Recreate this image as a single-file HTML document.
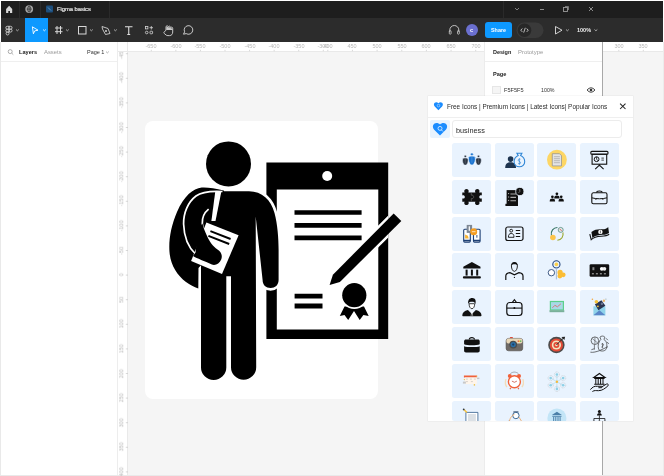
<!DOCTYPE html><html><head><meta charset="utf-8"><style>
*{margin:0;padding:0;box-sizing:border-box}
html,body{width:664px;height:476px;overflow:hidden;background:#fff;font-family:"Liberation Sans",sans-serif}
.ab{position:absolute}
.t{position:absolute;white-space:nowrap;line-height:1;will-change:transform}
svg{position:absolute;overflow:visible}
</style></head><body>
<div class="ab" style="left:0;top:42px;width:1px;height:434px;background:#e9e9e9"></div>
<div class="ab" style="left:0;top:475px;width:664px;height:1px;background:#e9e9e9"></div>
<div class="ab" style="left:663px;top:42px;width:1px;height:434px;background:#ececec"></div>
<div class="ab" style="left:1px;top:1px;width:662px;height:17px;background:#1e1e1e"></div>
<div class="ab" style="left:19px;top:1px;width:1px;height:17px;background:#2a2a2a"></div>
<div class="ab" style="left:40px;top:1px;width:1px;height:17px;background:#2a2a2a"></div>
<div class="ab" style="left:109px;top:1px;width:1px;height:17px;background:#2a2a2a"></div>
<div class="ab" style="left:503px;top:1px;width:1px;height:17px;background:#2a2a2a"></div>
<svg style="left:0;top:0" width="664" height="18" viewBox="0 0 664 18"><path d="M6.1 9.1 L9.15 5.8 L12.2 9.1 V13 H10 V11 H8.3 V13 H6.1 Z" fill="#d8d8d8"/><circle cx="29.2" cy="9.1" r="3.9" fill="#a6a6a6"/><ellipse cx="29.2" cy="9.1" rx="1.6" ry="3" fill="none" stroke="#1e1e1e" stroke-width="0.6"/><path d="M26.6 9.1 H31.8 M29.2 6.2 V12" stroke="#1e1e1e" stroke-width="0.6"/><rect x="46" y="5.5" width="7" height="7" rx="1" fill="#1d4f7e"/><path d="M48 7.5 L51 10.5" stroke="#6aa6d6" stroke-width="0.8"/><path d="M515 8 L517 10 L519 8" fill="none" stroke="#9a9a9a" stroke-width="0.8"/><path d="M540 9.5 H544" stroke="#9a9a9a" stroke-width="0.9"/><rect x="563.5" y="7.5" width="4" height="4" fill="none" stroke="#9a9a9a" stroke-width="0.9"/><path d="M565 6.5 H568.5 V10" fill="none" stroke="#9a9a9a" stroke-width="0.7"/><path d="M589 7 L593 11 M593 7 L589 11" stroke="#9a9a9a" stroke-width="0.9"/></svg>
<div class="t" style="left:57px;top:6.8px;font-size:5.9px;letter-spacing:-0.07px;color:#e6e6e6;font-weight:normal;-webkit-text-stroke:0.18px #e6e6e6">Figma basics</div>
<div class="ab" style="left:1px;top:18px;width:662px;height:24px;background:#2c2c2c"></div>
<div class="ab" style="left:25px;top:18px;width:23px;height:24px;background:#0d99ff"></div>
<svg style="left:0;top:18px" width="664" height="24" viewBox="0 18 664 24"><path d="M9 26.3 H7.3 A1.45 1.45 0 0 0 7.3 29.2 H9 Z M9 26.3 H10.6 A1.45 1.45 0 0 1 10.6 29.2 H9 Z M9 29.2 H7.3 A1.45 1.45 0 0 0 7.3 32.1 H9 Z M9 32.1 H7.3 A1.45 1.45 0 1 0 9 33.6 Z" fill="none" stroke="#cfcfcf" stroke-width="0.9"/><circle cx="10.6" cy="30.65" r="1.45" fill="none" stroke="#cfcfcf" stroke-width="0.9"/><path d="M16 29.5 L17.4 30.8 L18.8 29.5" fill="none" stroke="#c8c8c8" stroke-width="0.8"/><path d="M32.4 26.8 L38 30.2 L34.7 30.9 L33.4 33.8 Z" fill="none" stroke="#fff" stroke-width="0.9" stroke-linejoin="round"/><path d="M43 29.5 L44.4 30.8 L45.8 29.5" fill="none" stroke="#fff" stroke-width="0.8"/><path d="M57 26 V34 M60.5 26 V34 M55 28 H62.5 M55 31.7 H62.5" stroke="#d8d8d8" stroke-width="1"/><path d="M66 29.5 L67.4 30.8 L68.8 29.5" fill="none" stroke="#c8c8c8" stroke-width="0.8"/><rect x="78.5" y="26.5" width="7.5" height="7.5" fill="none" stroke="#d8d8d8" stroke-width="1"/><path d="M90 29.5 L91.4 30.8 L92.8 29.5" fill="none" stroke="#c8c8c8" stroke-width="0.8"/><path d="M102 26.5 L108 28.5 L110 33.5 L105.5 34.5 L102.5 29 Z" fill="none" stroke="#d0d0d0" stroke-width="0.9"/><circle cx="106" cy="31" r="1" fill="#d0d0d0"/><path d="M114 29.5 L115.4 30.8 L116.8 29.5" fill="none" stroke="#c8c8c8" stroke-width="0.8"/><path d="M125 26.8 H132.5 M128.75 26.8 V34.5 M127.3 34.5 H130.2" stroke="#e0e0e0" stroke-width="1.1"/><rect x="145.5" y="26.5" width="2.4" height="2.4" fill="none" stroke="#d8d8d8" stroke-width="0.8"/><path d="M151.3 26 V29.5 M149.5 27.7 H153" stroke="#d8d8d8" stroke-width="0.8"/><circle cx="146.7" cy="32.5" r="1.3" fill="none" stroke="#d8d8d8" stroke-width="0.8"/><rect x="150" y="31.2" width="2.6" height="2.6" rx="0.6" fill="none" stroke="#d8d8d8" stroke-width="0.8"/><path d="M166 30.3 L164.2 31.9 C163.7 32.4 163.8 33 164.3 33.5 L166.3 35.2 C166.8 35.5 167.3 35.6 168 35.6 H169.6 C171.6 35.6 172.7 34 172.7 32 V28.2 C172.7 27.2 171.3 26.8 170.7 27.6 C170.6 26.3 169.2 25.6 168.4 26.6 C167.7 25.3 166 25.6 166 27 Z" fill="none" stroke="#d8d8d8" stroke-width="0.9" stroke-linejoin="round"/><path d="M166.3 27.5 C167 26.5 168.6 26.6 168.6 27.6 C169.4 26.8 170.8 27.3 170.8 28.2 C171.5 28 172.3 28.3 172.3 29 L172.3 30 L166.3 30 Z" fill="#c8c8c8"/><path d="M183.5 34.2 L184.6 31.8 A4.3 4.3 0 1 1 186.2 33.6 Z" fill="none" stroke="#d8d8d8" stroke-width="0.9" stroke-linejoin="round"/><path d="M449.8 32 V30 A4.5 4.5 0 0 1 458.8 30 V32" fill="none" stroke="#cfcfcf" stroke-width="0.9"/><rect x="449.3" y="30.6" width="1.8" height="3.6" rx="0.8" fill="none" stroke="#cfcfcf" stroke-width="0.8"/><rect x="457.5" y="30.6" width="1.8" height="3.6" rx="0.8" fill="none" stroke="#cfcfcf" stroke-width="0.8"/><circle cx="472" cy="30" r="6" fill="#6b70d0"/><rect x="516.5" y="22.5" width="27" height="15.5" rx="7.75" fill="#3a3a3a"/><circle cx="524.5" cy="30.2" r="6.8" fill="#272727"/><path d="M522.3 28.5 L520.8 30.2 L522.3 31.9 M526.7 28.5 L528.2 30.2 L526.7 31.9 M525.3 27.8 L523.7 32.6" fill="none" stroke="#e0e0e0" stroke-width="0.8"/><path d="M555.5 26.5 L562 30.2 L555.5 34 Z" fill="none" stroke="#e0e0e0" stroke-width="0.9" stroke-linejoin="round"/><path d="M566 29.5 L567.4 30.8 L568.8 29.5" fill="none" stroke="#c8c8c8" stroke-width="0.8"/><path d="M594.5 29.5 L595.9 30.8 L597.3 29.5" fill="none" stroke="#c8c8c8" stroke-width="0.8"/></svg>
<div class="t" style="left:469.7px;top:27.9px;font-size:5.5px;color:#fff;font-weight:bold">c</div>
<div class="ab" style="left:485px;top:22px;width:27px;height:16px;border-radius:3px;background:#0d99ff"></div>
<div class="t" style="left:491px;top:28.1px;font-size:5.4px;color:#fff;font-weight:bold">Share</div>
<div class="t" style="left:577px;top:28.1px;font-size:5.5px;color:#f0f0f0;font-weight:bold">100%</div>
<div class="ab" style="left:117px;top:42px;width:546px;height:433px;background:#f5f5f5"></div>
<div class="ab" style="left:1px;top:42px;width:117px;height:433px;background:#fff;border-right:1px solid #ededed"></div>
<div class="ab" style="left:1px;top:61px;width:116px;height:1px;background:#efefef"></div>
<svg style="left:0;top:42px" width="120" height="20" viewBox="0 42 120 20"><circle cx="10.2" cy="51.6" r="2" fill="none" stroke="#9a9a9a" stroke-width="0.8"/><path d="M11.7 53.1 L13.3 54.7" stroke="#9a9a9a" stroke-width="0.8"/><path d="M106 51.6 L107.4 52.9 L108.8 51.6" fill="none" stroke="#9a9a9a" stroke-width="0.8"/></svg>
<div class="t" style="left:18.8px;top:49.9px;font-size:5.6px;color:#222;font-weight:bold">Layers</div>
<div class="t" style="left:43.8px;top:49.9px;font-size:5.9px;color:#9a9a9a">Assets</div>
<div class="t" style="left:86.7px;top:49.9px;font-size:5.5px;color:#333">Page 1</div>
<div class="ab" style="left:118px;top:42px;width:367px;height:10px;background:#fff;border-bottom:1px solid #e9e9e9"></div>
<div class="ab" style="left:118px;top:42px;width:10px;height:433px;background:#fff;border-right:1px solid #e9e9e9"></div>
<div class="ab" style="left:603px;top:42px;width:60px;height:10px;background:#fff;border-bottom:1px solid #e9e9e9"></div>
<div class="t" style="left:136.3px;width:30px;text-align:center;top:44.4px;font-size:5.5px;color:#b8b8b8">-650</div>
<div class="t" style="left:160.87px;width:30px;text-align:center;top:44.4px;font-size:5.5px;color:#b8b8b8">-600</div>
<div class="t" style="left:185.44px;width:30px;text-align:center;top:44.4px;font-size:5.5px;color:#b8b8b8">-550</div>
<div class="t" style="left:210.01px;width:30px;text-align:center;top:44.4px;font-size:5.5px;color:#b8b8b8">-500</div>
<div class="t" style="left:234.58px;width:30px;text-align:center;top:44.4px;font-size:5.5px;color:#b8b8b8">-450</div>
<div class="t" style="left:259.15px;width:30px;text-align:center;top:44.4px;font-size:5.5px;color:#b8b8b8">-400</div>
<div class="t" style="left:283.72px;width:30px;text-align:center;top:44.4px;font-size:5.5px;color:#b8b8b8">-350</div>
<div class="t" style="left:308.3px;width:30px;text-align:center;top:44.4px;font-size:5.5px;color:#b8b8b8">-300</div>
<div class="t" style="left:312.8px;width:30px;text-align:center;top:44.4px;font-size:5.5px;color:#b8b8b8">400</div>
<div class="t" style="left:337.45px;width:30px;text-align:center;top:44.4px;font-size:5.5px;color:#b8b8b8">450</div>
<div class="t" style="left:362.1px;width:30px;text-align:center;top:44.4px;font-size:5.5px;color:#b8b8b8">500</div>
<div class="t" style="left:386.75px;width:30px;text-align:center;top:44.4px;font-size:5.5px;color:#b8b8b8">550</div>
<div class="t" style="left:411.4px;width:30px;text-align:center;top:44.4px;font-size:5.5px;color:#b8b8b8">600</div>
<div class="t" style="left:436.05px;width:30px;text-align:center;top:44.4px;font-size:5.5px;color:#b8b8b8">650</div>
<div class="t" style="left:460.7px;width:30px;text-align:center;top:44.4px;font-size:5.5px;color:#b8b8b8">700</div>
<div class="t" style="left:603.8px;width:30px;text-align:center;top:44.4px;font-size:5.5px;color:#b8b8b8">300</div>
<div class="t" style="left:628.3px;width:30px;text-align:center;top:44.4px;font-size:5.5px;color:#b8b8b8">350</div>
<svg style="left:0;top:0" width="664" height="476" viewBox="0 0 664 476"><path d="M151.3 49.8 V51.2" stroke="#c8c8c8" stroke-width="0.7"/><path d="M175.87 49.8 V51.2" stroke="#c8c8c8" stroke-width="0.7"/><path d="M200.44 49.8 V51.2" stroke="#c8c8c8" stroke-width="0.7"/><path d="M225.01 49.8 V51.2" stroke="#c8c8c8" stroke-width="0.7"/><path d="M249.58 49.8 V51.2" stroke="#c8c8c8" stroke-width="0.7"/><path d="M274.15 49.8 V51.2" stroke="#c8c8c8" stroke-width="0.7"/><path d="M298.72 49.8 V51.2" stroke="#c8c8c8" stroke-width="0.7"/><path d="M323.3 49.8 V51.2" stroke="#c8c8c8" stroke-width="0.7"/><path d="M327.8 49.8 V51.2" stroke="#c8c8c8" stroke-width="0.7"/><path d="M352.45 49.8 V51.2" stroke="#c8c8c8" stroke-width="0.7"/><path d="M377.1 49.8 V51.2" stroke="#c8c8c8" stroke-width="0.7"/><path d="M401.75 49.8 V51.2" stroke="#c8c8c8" stroke-width="0.7"/><path d="M426.4 49.8 V51.2" stroke="#c8c8c8" stroke-width="0.7"/><path d="M451.05 49.8 V51.2" stroke="#c8c8c8" stroke-width="0.7"/><path d="M475.7 49.8 V51.2" stroke="#c8c8c8" stroke-width="0.7"/><path d="M618.8 49.8 V51.2" stroke="#c8c8c8" stroke-width="0.7"/><path d="M643.3 49.8 V51.2" stroke="#c8c8c8" stroke-width="0.7"/></svg>
<div class="t" style="left:107px;width:30px;text-align:center;top:50.7px;font-size:5.5px;color:#b8b8b8;transform:rotate(-90deg)">-450</div>
<div class="t" style="left:107px;width:30px;text-align:center;top:75.3px;font-size:5.5px;color:#b8b8b8;transform:rotate(-90deg)">-400</div>
<div class="t" style="left:107px;width:30px;text-align:center;top:99.9px;font-size:5.5px;color:#b8b8b8;transform:rotate(-90deg)">-350</div>
<div class="t" style="left:107px;width:30px;text-align:center;top:124.50000000000001px;font-size:5.5px;color:#b8b8b8;transform:rotate(-90deg)">-300</div>
<div class="t" style="left:107px;width:30px;text-align:center;top:149.1px;font-size:5.5px;color:#b8b8b8;transform:rotate(-90deg)">-250</div>
<div class="t" style="left:107px;width:30px;text-align:center;top:173.7px;font-size:5.5px;color:#b8b8b8;transform:rotate(-90deg)">-200</div>
<div class="t" style="left:107px;width:30px;text-align:center;top:198.3px;font-size:5.5px;color:#b8b8b8;transform:rotate(-90deg)">-150</div>
<div class="t" style="left:107px;width:30px;text-align:center;top:222.9px;font-size:5.5px;color:#b8b8b8;transform:rotate(-90deg)">-100</div>
<div class="t" style="left:107px;width:30px;text-align:center;top:247.5px;font-size:5.5px;color:#b8b8b8;transform:rotate(-90deg)">-50</div>
<div class="t" style="left:107px;width:30px;text-align:center;top:272.09999999999997px;font-size:5.5px;color:#b8b8b8;transform:rotate(-90deg)">0</div>
<div class="t" style="left:107px;width:30px;text-align:center;top:296.7px;font-size:5.5px;color:#b8b8b8;transform:rotate(-90deg)">50</div>
<div class="t" style="left:107px;width:30px;text-align:center;top:321.3px;font-size:5.5px;color:#b8b8b8;transform:rotate(-90deg)">100</div>
<div class="t" style="left:107px;width:30px;text-align:center;top:345.90000000000003px;font-size:5.5px;color:#b8b8b8;transform:rotate(-90deg)">150</div>
<div class="t" style="left:107px;width:30px;text-align:center;top:370.5px;font-size:5.5px;color:#b8b8b8;transform:rotate(-90deg)">200</div>
<div class="t" style="left:107px;width:30px;text-align:center;top:395.1px;font-size:5.5px;color:#b8b8b8;transform:rotate(-90deg)">250</div>
<div class="t" style="left:107px;width:30px;text-align:center;top:419.7px;font-size:5.5px;color:#b8b8b8;transform:rotate(-90deg)">300</div>
<div class="t" style="left:107px;width:30px;text-align:center;top:444.3px;font-size:5.5px;color:#b8b8b8;transform:rotate(-90deg)">350</div>
<div class="t" style="left:107px;width:30px;text-align:center;top:468.90000000000003px;font-size:5.5px;color:#b8b8b8;transform:rotate(-90deg)">400</div>
<svg style="left:0;top:0" width="664" height="476" viewBox="0 0 664 476"><path d="M125.8 53.7 H128" stroke="#c8c8c8" stroke-width="0.7"/><path d="M125.8 78.3 H128" stroke="#c8c8c8" stroke-width="0.7"/><path d="M125.8 102.9 H128" stroke="#c8c8c8" stroke-width="0.7"/><path d="M125.8 127.50000000000001 H128" stroke="#c8c8c8" stroke-width="0.7"/><path d="M125.8 152.1 H128" stroke="#c8c8c8" stroke-width="0.7"/><path d="M125.8 176.7 H128" stroke="#c8c8c8" stroke-width="0.7"/><path d="M125.8 201.3 H128" stroke="#c8c8c8" stroke-width="0.7"/><path d="M125.8 225.9 H128" stroke="#c8c8c8" stroke-width="0.7"/><path d="M125.8 250.5 H128" stroke="#c8c8c8" stroke-width="0.7"/><path d="M125.8 275.09999999999997 H128" stroke="#c8c8c8" stroke-width="0.7"/><path d="M125.8 299.7 H128" stroke="#c8c8c8" stroke-width="0.7"/><path d="M125.8 324.3 H128" stroke="#c8c8c8" stroke-width="0.7"/><path d="M125.8 348.90000000000003 H128" stroke="#c8c8c8" stroke-width="0.7"/><path d="M125.8 373.5 H128" stroke="#c8c8c8" stroke-width="0.7"/><path d="M125.8 398.1 H128" stroke="#c8c8c8" stroke-width="0.7"/><path d="M125.8 422.7 H128" stroke="#c8c8c8" stroke-width="0.7"/><path d="M125.8 447.3 H128" stroke="#c8c8c8" stroke-width="0.7"/><path d="M125.8 471.90000000000003 H128" stroke="#c8c8c8" stroke-width="0.7"/></svg>
<div class="ab" style="left:118px;top:42px;width:9px;height:9px;background:#fff"></div>
<div class="ab" style="left:118px;top:51px;width:10px;height:1px;background:#e9e9e9"></div>
<div class="ab" style="left:485px;top:42px;width:118px;height:433px;background:#fff;border-right:1px solid #a8a8a8"></div>
<div class="ab" style="left:485px;top:61px;width:117px;height:1px;background:#efefef"></div>
<div class="ab" style="left:484px;top:42px;width:1px;height:433px;background:#ececec"></div>
<div class="t" style="left:492.7px;top:49.9px;font-size:5.5px;color:#222;font-weight:bold">Design</div>
<div class="t" style="left:518.4px;top:49.9px;font-size:5.9px;color:#9a9a9a">Prototype</div>
<div class="t" style="left:492.7px;top:72.1px;font-size:5.6px;color:#222;font-weight:bold">Page</div>
<div class="ab" style="left:492px;top:85.5px;width:9px;height:8.5px;background:#f5f5f5;border:0.5px solid #e6e6e6"></div>
<div class="t" style="left:504.2px;top:87.9px;font-size:5.6px;color:#333">F5F5F5</div>
<div class="t" style="left:540.7px;top:87.9px;font-size:5.3px;color:#333">100%</div>
<svg style="left:0;top:0" width="664" height="476" viewBox="0 0 664 476"><path d="M587 90 Q591 85.5 595 90 Q591 94.5 587 90 Z" fill="none" stroke="#333" stroke-width="0.9"/><circle cx="591" cy="90" r="1.3" fill="#333"/></svg>
<div class="ab" style="left:145px;top:121px;width:233px;height:278px;border-radius:8px;background:#fff"></div>
<svg style="left:0;top:0" width="664" height="476" viewBox="0 0 664 476"><path fill="#000" fill-rule="evenodd" d="M266.4 162.6 H388.2 V339 H266.4 Z M276.8 189.5 V329.5 H378.3 V189.5 Z"/><circle cx="327.2" cy="176" r="5" fill="#fff"/><path fill="#000" d="M294.5 210.3 H361.6 V214.8 H294.5 Z M294.5 223 H361.6 V227.7 H294.5 Z M294.5 235.4 H361.6 V240.2 H294.5 Z M294.6 293.7 H322.5 V298.5 H294.6 Z M294.6 303.6 H322.5 V308.5 H294.6 Z"/><clipPath id="cpen"><rect x="260" y="150" width="128.2" height="200"/></clipPath><path clip-path="url(#cpen)" fill="#000" stroke="#fff" stroke-width="5" stroke-linejoin="miter" d="M393.7 213.5 L401.3 221 L339.9 282 L329.6 285 L332.9 274.7 Z"/><path fill="#000" d="M393.7 213.5 L401.3 221 L339.9 282 L329.6 285 L332.9 274.7 Z"/><path fill="#000" d="M344.5 306.5 L339.8 315.9 L344.5 315.1 L348.2 320.1 L354 311 L359.7 320.1 L363.4 315.1 L368.7 315.9 L364 306.5 Z"/><circle cx="354.3" cy="295.2" r="13.7" fill="#fff"/><circle cx="354.3" cy="295.2" r="12.1" fill="#000"/><path fill="#fff" stroke="#fff" stroke-width="5.5" d="M249 191.3 C262 191.3 271 200 274.5 213 C277.5 224 278.6 238 278.6 250 L278.6 280 C278.6 285 275 288 270.6 288 C266 288 262.6 285 262.6 280 L255.7 216.4 Z"/><circle cx="228.5" cy="163.9" r="22.5" fill="#000"/><path fill="#000" d="M201 191.3 H249 C262 191.3 271 200 274.5 213 C277.5 224 278.6 238 278.6 250 L278.6 280 C278.6 285 275 288 270.6 288 C266 288 262.6 285 262.6 280 L255.7 216.4 L256.2 367.2 A12.6 12.6 0 0 1 231 367.2 L231 276.2 L226.3 276.2 L226.3 367.4 A12.65 12.65 0 0 1 201 367.4 Z"/><path fill="#000" d="M223.8 190.6 C215 188.4 207 187.2 201.7 187.6 C193 188.5 184 196 177 212 C171 226 168.5 240 169.5 252 C170.5 265 177 275 186 282 C190 285 194 287 198.3 288.6 L198.5 268 L215 250 L224 192 Z"/><path fill="none" stroke="#fff" stroke-width="1.7" d="M222.5 191.5 C210 190.8 202 191.5 196 196 C188 202 183.4 213 183.6 224 C184 236 188 247 195.5 254"/><path fill="#fff" d="M215.3 191.2 L221.4 191.2 L215.5 221 L211.4 221 Z"/><path fill="none" stroke="#fff" stroke-width="1.7" d="M208.6 209.2 C204.2 212.8 202 217.5 202.3 223.5 C202.5 226 203.2 228.5 204 230.5"/><path fill="#fff" d="M206.4 222.6 L238.6 235.2 L222 273.9 L191.1 261 Z"/><path stroke="#000" stroke-width="1.9" d="M210.4 231.2 L230.6 239 M208.4 235.8 L229.2 244"/><path fill="#000" d="M195.5 252.5 L193 256 C197 258.5 204.5 261 211.9 264.6 C215.5 266 219.5 263.5 221.2 259.5 C222.8 255.5 221 251.5 217.5 249.5 C213 246.5 209 241 206.8 235.5 C205 231.5 203.5 228 202.4 223.5 L198 230 Z"/><path stroke="#fff" stroke-width="1" d="M199.7 268.5 V289"/></svg>
<div class="ab" style="left:427.5px;top:95.5px;width:205.5px;height:325.6px;background:#fff;box-shadow:0 0 0 0.5px rgba(0,0,0,0.06)"></div>
<div class="ab" style="left:428px;top:116.5px;width:205px;height:1px;background:#efefef"></div>
<div class="t" style="left:446.9px;top:104px;font-size:6.4px;color:#2a2a2a">Free Icons | Premium Icons | Latest Icons| Popular Icons</div>
<div class="ab" style="left:430.3px;top:119.8px;width:19.5px;height:18.4px;border-radius:2px;background:#e8f3fe"></div>
<div class="ab" style="left:452.3px;top:120.3px;width:169.6px;height:17.7px;border-radius:3px;background:#fff;border:0.6px solid #ececec"></div>
<div class="t" style="left:455.6px;top:126.8px;font-size:7.3px;color:#2a2a2a">business</div>
<div class="ab" style="left:452.4px;top:142.7px;width:39px;height:34.0px;border-radius:2.5px;background:#e9f3fe"></div>
<div class="ab" style="left:494.9px;top:142.7px;width:39px;height:34.0px;border-radius:2.5px;background:#e9f3fe"></div>
<div class="ab" style="left:537.4px;top:142.7px;width:39px;height:34.0px;border-radius:2.5px;background:#e9f3fe"></div>
<div class="ab" style="left:579.9px;top:142.7px;width:39px;height:34.0px;border-radius:2.5px;background:#e9f3fe"></div>
<div class="ab" style="left:452.4px;top:179.6px;width:39px;height:34.0px;border-radius:2.5px;background:#e9f3fe"></div>
<div class="ab" style="left:494.9px;top:179.6px;width:39px;height:34.0px;border-radius:2.5px;background:#e9f3fe"></div>
<div class="ab" style="left:537.4px;top:179.6px;width:39px;height:34.0px;border-radius:2.5px;background:#e9f3fe"></div>
<div class="ab" style="left:579.9px;top:179.6px;width:39px;height:34.0px;border-radius:2.5px;background:#e9f3fe"></div>
<div class="ab" style="left:452.4px;top:216.5px;width:39px;height:34.0px;border-radius:2.5px;background:#e9f3fe"></div>
<div class="ab" style="left:494.9px;top:216.5px;width:39px;height:34.0px;border-radius:2.5px;background:#e9f3fe"></div>
<div class="ab" style="left:537.4px;top:216.5px;width:39px;height:34.0px;border-radius:2.5px;background:#e9f3fe"></div>
<div class="ab" style="left:579.9px;top:216.5px;width:39px;height:34.0px;border-radius:2.5px;background:#e9f3fe"></div>
<div class="ab" style="left:452.4px;top:253.4px;width:39px;height:34.0px;border-radius:2.5px;background:#e9f3fe"></div>
<div class="ab" style="left:494.9px;top:253.4px;width:39px;height:34.0px;border-radius:2.5px;background:#e9f3fe"></div>
<div class="ab" style="left:537.4px;top:253.4px;width:39px;height:34.0px;border-radius:2.5px;background:#e9f3fe"></div>
<div class="ab" style="left:579.9px;top:253.4px;width:39px;height:34.0px;border-radius:2.5px;background:#e9f3fe"></div>
<div class="ab" style="left:452.4px;top:290.3px;width:39px;height:34.0px;border-radius:2.5px;background:#e9f3fe"></div>
<div class="ab" style="left:494.9px;top:290.3px;width:39px;height:34.0px;border-radius:2.5px;background:#e9f3fe"></div>
<div class="ab" style="left:537.4px;top:290.3px;width:39px;height:34.0px;border-radius:2.5px;background:#e9f3fe"></div>
<div class="ab" style="left:579.9px;top:290.3px;width:39px;height:34.0px;border-radius:2.5px;background:#e9f3fe"></div>
<div class="ab" style="left:452.4px;top:327.2px;width:39px;height:34.0px;border-radius:2.5px;background:#e9f3fe"></div>
<div class="ab" style="left:494.9px;top:327.2px;width:39px;height:34.0px;border-radius:2.5px;background:#e9f3fe"></div>
<div class="ab" style="left:537.4px;top:327.2px;width:39px;height:34.0px;border-radius:2.5px;background:#e9f3fe"></div>
<div class="ab" style="left:579.9px;top:327.2px;width:39px;height:34.0px;border-radius:2.5px;background:#e9f3fe"></div>
<div class="ab" style="left:452.4px;top:364.1px;width:39px;height:34.0px;border-radius:2.5px;background:#e9f3fe"></div>
<div class="ab" style="left:494.9px;top:364.1px;width:39px;height:34.0px;border-radius:2.5px;background:#e9f3fe"></div>
<div class="ab" style="left:537.4px;top:364.1px;width:39px;height:34.0px;border-radius:2.5px;background:#e9f3fe"></div>
<div class="ab" style="left:579.9px;top:364.1px;width:39px;height:34.0px;border-radius:2.5px;background:#e9f3fe"></div>
<div class="ab" style="left:452.4px;top:401.0px;width:39px;height:20.0px;border-radius:2.5px;background:#e9f3fe"></div>
<div class="ab" style="left:494.9px;top:401.0px;width:39px;height:20.0px;border-radius:2.5px;background:#e9f3fe"></div>
<div class="ab" style="left:537.4px;top:401.0px;width:39px;height:20.0px;border-radius:2.5px;background:#e9f3fe"></div>
<div class="ab" style="left:579.9px;top:401.0px;width:39px;height:20.0px;border-radius:2.5px;background:#e9f3fe"></div>
<svg style="left:0;top:0" width="664" height="476" viewBox="0 0 664 476"><path transform="translate(438.4 106.6) scale(0.85)" fill="#1a8cff" d="M0 4.2 L-4.3 0 C-5.6 -1.3 -5.6 -3.3 -4.3 -4.4 C-3.1 -5.4 -1.2 -5.2 0 -3.9 C1.2 -5.2 3.1 -5.4 4.3 -4.4 C5.6 -3.3 5.6 -1.3 4.3 0 Z"/><circle cx="438.5" cy="105.6" r="1.3" fill="none" stroke="#bfe0ff" stroke-width="0.6"/><path transform="translate(440 129.8) scale(1.35)" fill="#1a8cff" d="M0 4.2 L-4.3 0 C-5.6 -1.3 -5.6 -3.3 -4.3 -4.4 C-3.1 -5.4 -1.2 -5.2 0 -3.9 C1.2 -5.2 3.1 -5.4 4.3 -4.4 C5.6 -3.3 5.6 -1.3 4.3 0 Z"/><circle cx="440" cy="128.4" r="2" fill="none" stroke="#cfe8ff" stroke-width="0.9"/><path d="M441.3 129.8 L443 131.5" stroke="#cfe8ff" stroke-width="0.9"/><path d="M620.1 103.6 L625.5 109 M625.5 103.6 L620.1 109" stroke="#222" stroke-width="1.05"/></svg>
<svg style="left:0;top:0" width="664" height="476" viewBox="0 0 664 476"><clipPath id="cplug"><rect x="428" y="96" width="205" height="325"/></clipPath><g clip-path="url(#cplug)"><g transform="translate(471.90 159.70)"><g transform="translate(-6.6 0.5) scale(0.82)"><circle cx="0" cy="-4.6" r="1.35" fill="#2e3744" stroke="#e9f3fe" stroke-width="0.5"/><path d="M-3.3 -1.6 C-3.9 1.5 -2.6 4.8 -0.9 6 H0.9 C2.6 4.8 3.9 1.5 3.3 -1.6 C2.8 -3.2 -2.8 -3.2 -3.3 -1.6 Z" fill="#2e3744" stroke="#e9f3fe" stroke-width="0.6"/><path d="M0 -2.6 V4" stroke="#e9f3fe" stroke-width="0.3" opacity="0.6"/></g><g transform="translate(6.6 0.5) scale(0.82)"><circle cx="0" cy="-4.6" r="1.35" fill="#2e3744" stroke="#e9f3fe" stroke-width="0.5"/><path d="M-3.3 -1.6 C-3.9 1.5 -2.6 4.8 -0.9 6 H0.9 C2.6 4.8 3.9 1.5 3.3 -1.6 C2.8 -3.2 -2.8 -3.2 -3.3 -1.6 Z" fill="#2e3744" stroke="#e9f3fe" stroke-width="0.6"/><path d="M0 -2.6 V4" stroke="#e9f3fe" stroke-width="0.3" opacity="0.6"/></g><g transform="translate(0 -0.8) scale(1)"><circle cx="0" cy="-4.6" r="1.35" fill="#1b74d0" stroke="#e9f3fe" stroke-width="0.5"/><path d="M-3.3 -1.6 C-3.9 1.5 -2.6 4.8 -0.9 6 H0.9 C2.6 4.8 3.9 1.5 3.3 -1.6 C2.8 -3.2 -2.8 -3.2 -3.3 -1.6 Z" fill="#1b74d0" stroke="#e9f3fe" stroke-width="0.6"/><path d="M0 -2.6 V4" stroke="#e9f3fe" stroke-width="0.3" opacity="0.6"/></g></g><g transform="translate(514.40 159.70)"><circle cx="-3.8" cy="-0.6" r="2.8" fill="#1f3550"/><path d="M-9.2 8.3 C-9.2 4.2 -7 2.6 -3.8 2.6 C-0.6 2.6 1.6 4.2 1.6 8.3 Z" fill="#1f3550"/><path d="M2.5 -6.5 H7.5 L6.2 -4.2 C9 -3 10.3 -0.5 10.3 2 C10.3 5 8 7 5 7 C2 7 -0.3 5 -0.3 2 C-0.3 -0.5 1 -3 3.8 -4.2 Z" fill="none" stroke="#2f86d6" stroke-width="1.1"/><path d="M6 -0.5 C5 -1 3.8 -0.6 3.8 0.6 C3.8 1.8 6.2 1.6 6.2 3 C6.2 4.1 4.8 4.4 3.8 3.8 M5 -1.4 V5" fill="none" stroke="#2f86d6" stroke-width="0.7"/></g><g transform="translate(556.90 159.70)"><circle cx="0" cy="0" r="9.9" fill="#fdd664"/><path d="M-4.6 -6 H2.6 L4.6 -4 V6.2 H-4.6 Z" fill="#e4e4e4" stroke="#8d8d8d" stroke-width="0.7"/><path d="M-3 -3 H3 M-3 -1 H3 M-3 1 H3 M-3 3 H3" stroke="#9a9a9a" stroke-width="0.6"/></g><g transform="translate(599.40 159.70)"><rect x="-8.6" y="-8.3" width="17.2" height="2.8" rx="1" fill="none" stroke="#111" stroke-width="1.1"/><rect x="-7.3" y="-5.5" width="14.6" height="10" fill="none" stroke="#111" stroke-width="1.1"/><circle cx="-2.8" cy="-0.5" r="2.4" fill="none" stroke="#111" stroke-width="1"/><path d="M-2.8 -0.5 V-2.9 M-2.8 -0.5 L-1.2 1.2" stroke="#111" stroke-width="0.8"/><path d="M2 -1.6 H4.5 M2 0.4 H4.5" stroke="#111" stroke-width="0.8"/><path d="M0 4.5 V6.5 M0 5.5 L-4.2 9.5 M0 5.5 L4.2 9.5" stroke="#111" stroke-width="1.1"/></g><g transform="translate(471.90 196.60)"><path fill="#111" d="M-9.6 -4.2 H-7.2 C-7.9 -5 -8 -7.5 -5.4 -7.6 C-2.8 -7.5 -2.9 -5 -3.6 -4.2 H3.6 C2.9 -5 2.8 -7.5 5.4 -7.6 C8 -7.5 7.9 -5 7.2 -4.2 H9.9 V-1.2 C8.4 -1.6 7.4 -0.8 7.4 0.3 C7.4 1.4 8.4 2.2 9.9 1.8 V5.2 H7.2 C7.9 6 8 8.3 5.4 8.5 C2.8 8.3 2.9 6 3.6 5.2 H-3.6 C-2.9 6 -2.8 8.3 -5.4 8.5 C-8 8.3 -7.9 6 -7.2 5.2 H-9.6 V1.8 C-8.1 2.2 -7.1 1.4 -7.1 0.3 C-7.1 -0.8 -8.1 -1.6 -9.6 -1.2 Z"/><path d="M-0.6 -3.6 V-1.4 C0.8 -1.8 1.8 -1 1.8 0.3 C1.8 1.6 0.8 2.4 -0.6 2 V4.6" fill="none" stroke="#777" stroke-width="0.6"/></g><g transform="translate(514.40 196.60)"><path fill="#111" d="M-7.8 -6.5 H3.6 V7.5 H-7.8 Z"/><path d="M-9 7.2 H3.6 V9.4 H-9 Z" fill="#111"/><path d="M-6.3 -3 H-5.3 M-6.3 0.4 H-5.3 M-6.3 3.8 H-5.3" stroke="#ddd" stroke-width="0.9"/><path d="M-4 -2.6 H1.6 M-4 0.8 H1.6 M-4 4.2 H1.6" stroke="#aaa" stroke-width="1.1"/><circle cx="5.4" cy="-5.1" r="4.1" fill="#111" stroke="#e9f3fe" stroke-width="0.8"/><path d="M5.4 -7.4 V-5 L4.2 -3.8" fill="none" stroke="#bbb" stroke-width="0.6"/></g><g transform="translate(556.90 196.60)"><circle cx="0" cy="-2.8" r="1.35" fill="#111"/><path d="M-2.7 1.9000000000000004 C-2.7 -0.5999999999999996 -1.6 -1.1999999999999997 0 -1.1999999999999997 C1.6 -1.1999999999999997 2.7 -0.5999999999999996 2.7 1.9000000000000004 Z" fill="#111"/><circle cx="-4.5" cy="0.2" r="1.35" fill="#111"/><path d="M-7.2 4.9 C-7.2 2.4000000000000004 -6.1 1.8 -4.5 1.8 C-2.9 1.8 -1.7999999999999998 2.4000000000000004 -1.7999999999999998 4.9 Z" fill="#111"/><circle cx="4.3" cy="0.2" r="1.35" fill="#111"/><path d="M1.5999999999999996 4.9 C1.5999999999999996 2.4000000000000004 2.6999999999999997 1.8 4.3 1.8 C5.9 1.8 7.0 2.4000000000000004 7.0 4.9 Z" fill="#111"/></g><g transform="translate(599.40 196.60)"><path d="M-2.8 -4 C-2.8 -6.2 2.8 -6.2 2.8 -4" fill="none" stroke="#111" stroke-width="1.1"/><rect x="-7.6" y="-3.8" width="15.2" height="11" rx="1.6" fill="none" stroke="#111" stroke-width="1.1"/><path d="M-7.6 1.2 C-3 2.5 3 2.5 7.6 1.2 M-3.5 1.8 V3.2 M3.5 1.8 V3.2" fill="none" stroke="#111" stroke-width="1"/></g><g transform="translate(471.90 233.50)"><rect x="-8.2" y="-4.2" width="6.6" height="12.8" rx="1" fill="#fff" stroke="#1d3f73" stroke-width="1.1"/><rect x="1.6" y="-4.2" width="6.6" height="12.8" rx="1" fill="#fff" stroke="#1d3f73" stroke-width="1.1"/><path d="M-8.2 7 H-1.6 M1.6 7 H8.2" stroke="#1d3f73" stroke-width="1.4"/><path d="M-6.8 1 L-4 2.2 L-3.2 5 H-6.8 Z" fill="#f6b232"/><rect x="-5.2" y="-8.6" width="5.4" height="8" fill="#7d8794"/><rect x="-3.2" y="-7.2" width="1.2" height="4.5" fill="#fff"/><circle cx="1.8" cy="-1.8" r="3.5" fill="#f59d20"/><path d="M0 -1.8 H3.6" stroke="#fff" stroke-width="0.7"/><path d="M5 1.5 V4.2" stroke="#1d3f73" stroke-width="0.9"/></g><g transform="translate(514.40 233.50)"><rect x="-8.6" y="-6.5" width="17.2" height="13.5" rx="2" fill="none" stroke="#111" stroke-width="1.2"/><circle cx="-3.2" cy="-2.8" r="1.4" fill="none" stroke="#111" stroke-width="0.9"/><path d="M-6 3.8 C-6 1 -5 0 -3.2 0 C-1.4 0 -0.4 1 -0.4 3.8 Z" fill="none" stroke="#111" stroke-width="0.9"/><path d="M1.4 -3 H5.8 M1.4 0 H5.8 M1.4 3 H5.8" stroke="#111" stroke-width="1"/></g><g transform="translate(556.90 233.50)"><path d="M-5.5 2 C-6.5 -2.5 -3.5 -6 0.5 -6" fill="none" stroke="#2f6f5d" stroke-width="1.1"/><path d="M6 -1 C7 3 4.5 6.5 0.5 6.8" fill="none" stroke="#9aa62c" stroke-width="1.1"/><circle cx="3.8" cy="-3.6" r="2.5" fill="#dfe8e8" stroke="#2f6f5d" stroke-width="0.6"/><path d="M2.8 -4.6 L4.8 -2.6" stroke="#d33" stroke-width="0.7"/><circle cx="-4" cy="4" r="2.8" fill="#fdc54a"/></g><g transform="translate(599.40 233.50)"><path fill="#111" d="M-8 -1.5 C-5 -4 -1 -4.5 2.5 -4.2 C5 -4 7.5 -5 8.8 -6.5 L9.6 -0.5 C7 1.5 4 1.2 0.5 1.5 C-3 1.8 -5.5 3 -7 4.5 Z"/><path d="M-9.6 0.6 L-8.2 6.2 C-6 4 -2 3 1.8 2.8 C5.5 2.6 8 2.2 9.8 0.8" fill="none" stroke="#111" stroke-width="1.1"/><circle cx="1" cy="-1.6" r="2.2" fill="#fff"/><path d="M1 -3 V-0.2" stroke="#111" stroke-width="0.6"/></g><g transform="translate(471.90 270.40)"><path fill="#111" d="M-8.6 -3.6 L0 -8.4 L8.6 -3.6 V-1.8 H-8.6 Z"/><rect x="-6.3" y="-0.8" width="2" height="6" fill="#111"/><rect x="-1" y="-0.8" width="2" height="6" fill="#111"/><rect x="4.3" y="-0.8" width="2" height="6" fill="#111"/><rect x="-9" y="5.8" width="18" height="2.4" rx="1" fill="#111"/></g><g transform="translate(514.40 270.40)"><path d="M-3 -4.5 C-3 -8.5 3 -8.5 3 -4.5 C3 -1.5 1.5 1 0 1 C-1.5 1 -3 -1.5 -3 -4.5 Z" fill="none" stroke="#111" stroke-width="0.9"/><path d="M-3.2 -5 C-3.5 -9.5 3.5 -9.5 3.2 -5 C2 -6.5 -2 -6.5 -3.2 -5 Z" fill="#111"/><path d="M-8.6 9.6 V5.6 C-8.6 3.6 -7 2.6 -4.5 2.3 L0 4.5 L4.5 2.3 C7 2.6 8.6 3.6 8.6 5.6 V9.6" fill="none" stroke="#111" stroke-width="1.2"/><circle cx="0" cy="7" r="0.6" fill="#111"/></g><g transform="translate(556.90 270.40)"><circle cx="-0.5" cy="-6" r="3.6" fill="none" stroke="#274a80" stroke-width="1.1"/><circle cx="-0.5" cy="-6" r="1.8" fill="#fbd14b"/><path d="M-0.5 -2.4 V9" stroke="#9fb3d0" stroke-width="0.9"/><circle cx="-5.5" cy="2.3" r="3.2" fill="#fff" stroke="#2c4a78" stroke-width="0.9"/><circle cx="3.2" cy="2" r="2.6" fill="#fbbd34"/><circle cx="6.3" cy="4.4" r="2.4" fill="#fbbd34"/><circle cx="3" cy="5.6" r="2.4" fill="#fbbd34"/></g><g transform="translate(599.40 270.40)"><rect x="-9.8" y="-6.2" width="19.6" height="12.6" rx="1.4" fill="#111"/><circle cx="2.4" cy="-1.6" r="1.9" fill="#fff"/><circle cx="5" cy="-1.6" r="1.9" fill="#eee"/><rect x="-7" y="-3.2" width="2" height="3" fill="#888"/><path d="M-7.5 3.4 H-5.5 M-3.5 3.4 H-1.5 M0.5 3.4 H2.5 M4.5 3.4 H6.5" stroke="#fff" stroke-width="0.7"/></g><g transform="translate(471.90 307.30)"><path d="M-2.8 -3.6 C-2.8 -0.5 -1.5 1.4 0 1.4 C1.5 1.4 2.8 -0.5 2.8 -3.6 Z" fill="#fff" stroke="#111" stroke-width="0.8"/><path fill="#111" d="M-3.6 -3 C-4.5 -7.5 -2 -9.5 0.5 -9.3 C3.5 -9 4.5 -6.8 3.4 -3 C3 -5 2 -5.5 0 -5.5 C-2 -5.5 -3.2 -5 -3.6 -3 Z"/><path fill="#111" d="M-9.6 8 C-9.6 5 -7.5 3.6 -4 2.6 L0 6.6 L4 2.6 C7.5 3.6 9.6 5 9.6 8 C9.6 8.6 9.2 9 8.6 9 H-8.6 C-9.2 9 -9.6 8.6 -9.6 8 Z"/><path d="M0 3.2 L-0.8 8.6 M0 3.2 L0.8 8.6" stroke="#fff" stroke-width="0.5"/></g><g transform="translate(514.40 307.30)"><path d="M-2 -5 L0 -7.6 L2 -5" fill="none" stroke="#111" stroke-width="1.1"/><rect x="-7.6" y="-4.8" width="15.2" height="13" rx="3" fill="none" stroke="#111" stroke-width="1.2"/><path d="M-7.6 0.8 H7.6" stroke="#111" stroke-width="1.1"/><circle cx="0" cy="0.8" r="1" fill="#111"/></g><g transform="translate(556.90 307.30)"><rect x="-6.5" y="-5.8" width="13" height="8.5" fill="#a9d8e6" stroke="#5cd08c" stroke-width="1.2"/><path d="M-4.5 0.5 L-2 -2 L0.5 -0.5 L4 -3.5" fill="none" stroke="#e06262" stroke-width="0.8"/><rect x="-7.4" y="2.9" width="14.8" height="2" fill="#7ab09a"/></g><g transform="translate(599.40 307.30)"><rect x="-6" y="-1" width="12" height="9" fill="#8fd3ea"/><path d="M-6 8 L0 3 L6 8 Z" fill="#5a86c8"/><path d="M-4.5 -3 L2 -7 L6 -1.5 L-1 3 Z" fill="#2b3550"/><circle cx="-1.5" cy="-1" r="0.9" fill="#f5c33b"/><circle cx="2.5" cy="-3.5" r="1.2" fill="#6c7694"/><circle cx="-3" cy="-5.5" r="1.8" fill="#f5c33b"/><circle cx="-7" cy="-8" r="0.8" fill="#f5a93b"/><circle cx="4.5" cy="-6.5" r="1.2" fill="#f0b86a"/><circle cx="6.5" cy="-8.2" r="0.6" fill="#9aa"/></g><g transform="translate(471.90 344.20)"><path d="M-2.6 -4.6 C-2.6 -7.2 2.6 -7.2 2.6 -4.6" fill="none" stroke="#111" stroke-width="1.2"/><path fill="#111" d="M-7.8 -3 C-7.8 -4.2 -7 -4.8 -6 -4.8 H6 C7 -4.8 7.8 -4.2 7.8 -3 V0 C5 1.4 -5 1.4 -7.8 0 Z"/><path fill="#111" d="M-7.8 2 C-5 3.2 5 3.2 7.8 2 V6.6 C7.8 7.6 7 8.2 6 8.2 H-6 C-7 8.2 -7.8 7.6 -7.8 6.6 Z"/></g><g transform="translate(514.40 344.20)"><rect x="-4.5" y="-7.2" width="3" height="1.6" rx="0.6" fill="#e54b3c"/><rect x="-8.3" y="-5.8" width="16.6" height="12.4" rx="2.5" fill="#6f6a66" stroke="#4b4744" stroke-width="0.6"/><rect x="-8" y="-5.6" width="16" height="5" rx="2" fill="#e8d7b8"/><circle cx="-1.2" cy="0.4" r="3.9" fill="#4c4c4c"/><circle cx="-1.2" cy="0.4" r="2.6" fill="#2a6ea6"/><circle cx="-1.2" cy="0.4" r="1.1" fill="#1c3f66"/><rect x="3.3" y="-3.8" width="1.2" height="1.6" fill="#e5533d"/><rect x="4.5" y="-3.8" width="1.2" height="1.6" fill="#f5c242"/><rect x="5.7" y="-3.8" width="1.2" height="1.6" fill="#5cb85c"/></g><g transform="translate(556.90 344.20)"><circle cx="-0.5" cy="0.8" r="8.2" fill="#4b4b4b"/><circle cx="-0.5" cy="0.8" r="6.6" fill="#e44a36"/><circle cx="-0.5" cy="0.8" r="4.6" fill="#f3e3c0"/><circle cx="-0.5" cy="0.8" r="3" fill="#e44a36"/><circle cx="-0.5" cy="0.8" r="1.2" fill="#f3e3c0"/><path d="M-0.5 0.8 L6.5 -6.2" stroke="#222" stroke-width="1"/><path d="M4.5 -7.2 L7.5 -4.2 L8.2 -7.5 Z" fill="#222"/></g><g transform="translate(599.40 344.20)"><circle cx="-4.5" cy="-3.5" r="3.8" fill="none" stroke="#333" stroke-width="0.7"/><path d="M-7 -5.5 L-2 -1.5 M-4.5 -7 V0" stroke="#333" stroke-width="0.5"/><path d="M0.5 -7 C2 -8.5 4 -8.5 5.5 -7 L4.5 -4.8 C7.5 -3 8 1 7 4.5 C6 7 2 7.5 0 6 C-2 4 -1.5 -2 1.5 -4.8 Z" fill="none" stroke="#333" stroke-width="0.7"/><path d="M3.2 -1 V4 M2 0 C3 -1 4.5 -0.5 4 1 C3.5 2 2 2 2.5 3.5" fill="none" stroke="#333" stroke-width="0.6"/><path d="M-9 8 C-6 8.5 -3 7.5 0 6.5 L8.5 2.5 M-8 5.5 L-5 4.5 M6.5 -6 L8.5 -4 M7.5 -2 L9.5 -0.5" fill="none" stroke="#333" stroke-width="0.7"/><path d="M-5 0.5 V5.5" stroke="#333" stroke-width="0.6"/></g><g transform="translate(471.90 381.10)"><rect x="-8" y="-5.6" width="13" height="2" fill="#f0613a"/><path d="M-7 -3.6 H5 V3 H-7 Z" fill="#fff5ea"/><path d="M-6 -2 H-4 M-2 -2 H0 M2 -2 H4 M-6 0.5 H-4 M-1 0.5 H1" stroke="#c7c2bd" stroke-width="0.7"/><rect x="-9" y="0.5" width="3" height="2" fill="#c8c8c8"/><rect x="5" y="-3.5" width="2.5" height="1.5" fill="#c8c8c8"/><circle cx="-7.5" cy="-1.5" r="0.7" fill="#f5c242"/><circle cx="2.5" cy="3.8" r="0.8" fill="#f5c242"/><circle cx="5" cy="-5" r="0.6" fill="#f5c242"/></g><g transform="translate(514.40 381.10)"><path d="M-8.5 -2 C-9.5 1 -9 4 -7.5 6 M8.5 -2 C9.5 1 9 4 7.5 6" fill="none" stroke="#f3dcb8" stroke-width="1.3"/><path d="M-4 -7.5 C-1.5 -9.5 1.5 -9.5 4 -7.5" fill="none" stroke="#98a2ac" stroke-width="1"/><circle cx="-4.6" cy="-5.2" r="2" fill="#f0613a"/><circle cx="4.6" cy="-5.2" r="2" fill="#f0613a"/><circle cx="0" cy="0.6" r="6" fill="#fff" stroke="#f0613a" stroke-width="1.4"/><path d="M-2.5 0 L0 1.2 L2.5 0" fill="none" stroke="#c0392b" stroke-width="0.7"/><path d="M-3.5 6.6 L-4.5 8 M3.5 6.6 L4.5 8" stroke="#f0613a" stroke-width="1.1"/></g><g transform="translate(556.90 381.10)"><path d="M0 0.6 L6.24 4.20" stroke="#a8dcef" stroke-width="0.6"/><circle cx="6.24" cy="4.20" r="1.3" fill="#8fd0e6"/><circle cx="6.24" cy="4.20" r="2.6" fill="none" stroke="#b8b8b8" stroke-width="0.5" stroke-dasharray="0.8 0.6"/><path d="M0 0.6 L0.00 7.80" stroke="#a8dcef" stroke-width="0.6"/><circle cx="0.00" cy="7.80" r="1.3" fill="#8fd0e6"/><circle cx="0.00" cy="7.80" r="2.6" fill="none" stroke="#b8b8b8" stroke-width="0.5" stroke-dasharray="0.8 0.6"/><path d="M0 0.6 L-6.24 4.20" stroke="#a8dcef" stroke-width="0.6"/><circle cx="-6.24" cy="4.20" r="1.3" fill="#8fd0e6"/><circle cx="-6.24" cy="4.20" r="2.6" fill="none" stroke="#b8b8b8" stroke-width="0.5" stroke-dasharray="0.8 0.6"/><path d="M0 0.6 L-6.24 -3.00" stroke="#a8dcef" stroke-width="0.6"/><circle cx="-6.24" cy="-3.00" r="1.3" fill="#8fd0e6"/><circle cx="-6.24" cy="-3.00" r="2.6" fill="none" stroke="#b8b8b8" stroke-width="0.5" stroke-dasharray="0.8 0.6"/><path d="M0 0.6 L-0.00 -6.60" stroke="#a8dcef" stroke-width="0.6"/><circle cx="-0.00" cy="-6.60" r="1.3" fill="#8fd0e6"/><circle cx="-0.00" cy="-6.60" r="2.6" fill="none" stroke="#b8b8b8" stroke-width="0.5" stroke-dasharray="0.8 0.6"/><path d="M0 0.6 L6.24 -3.00" stroke="#a8dcef" stroke-width="0.6"/><circle cx="6.24" cy="-3.00" r="1.3" fill="#8fd0e6"/><circle cx="6.24" cy="-3.00" r="2.6" fill="none" stroke="#b8b8b8" stroke-width="0.5" stroke-dasharray="0.8 0.6"/><circle cx="0" cy="0.6" r="1.2" fill="#f5b83b"/></g><g transform="translate(599.40 381.10)"><path d="M-5.6 -3.6 L0 -7.6 L5.6 -3.6 Z" fill="none" stroke="#111" stroke-width="1.1"/><path d="M-5.2 -2.6 H5.2 M-5.2 3.2 H5.2" stroke="#111" stroke-width="1.1"/><path d="M-3.6 -2.2 V3 M-1.2 -2.2 V3 M1.2 -2.2 V3 M3.6 -2.2 V3" stroke="#111" stroke-width="1"/><path d="M-9 8.5 C-7 6 -5 4.8 -2 5.2 H2 C3 5.2 3 6.6 2 6.6 H-1 M2 6 L7 3 C8.5 2.2 9.5 3.8 8.5 4.8 C6 7 3 9.6 -1 9.6 C-3 9.6 -5 9 -7 10.4" fill="none" stroke="#111" stroke-width="1"/></g><g transform="translate(471.90 418.00)"><path d="M-6 -5.6 H6 V9 H-6 Z" fill="#fff" stroke="#2d5b8a" stroke-width="0.8"/><path d="M-4 -3 H4 M-4 -1 H4 M-4 1 H4 M-4 3 H4" stroke="#9aa7b5" stroke-width="0.7"/><path d="M-8 -8.5 L-5 -5.5" stroke="#f5c242" stroke-width="1.6"/><circle cx="-8.2" cy="-8.6" r="0.9" fill="#2d3b4a"/></g><g transform="translate(514.40 418.00)"><rect x="-1" y="-7" width="5" height="2.5" fill="#7789a0"/><circle cx="1.5" cy="-2.5" r="3.2" fill="#fff" stroke="#2d5b8a" stroke-width="0.9"/><path d="M-5 3 C-4 -1 -2 -3 0 -3.5 M4.5 -1 L7 3" fill="none" stroke="#f0a35a" stroke-width="0.8"/><circle cx="-5.5" cy="4" r="1.2" fill="#2d5b8a"/></g><g transform="translate(556.90 418.00)"><circle cx="0" cy="0" r="9.5" fill="#c3e5f7"/><path d="M-5 -3 L0 -6.2 L5 -3 Z M-4.6 -2.2 H4.6 V-1.3 H-4.6 Z" fill="#4a7fa8"/><path d="M-3.2 -1 V3 M-1.1 -1 V3 M1.1 -1 V3 M3.2 -1 V3" stroke="#4a7fa8" stroke-width="1"/></g><g transform="translate(599.40 418.00)"><circle cx="0" cy="-6.6" r="1.5" fill="#111"/><path d="M-2.4 -2.6 C-2.4 -4.2 -1.4 -4.8 0 -4.8 C1.4 -4.8 2.4 -4.2 2.4 -2.6 Z" fill="#111"/><path d="M0 -2.6 V0.5 M-5.5 0.5 H5.5 M-5.5 0.5 V2.5 M5.5 0.5 V2.5 M0 0.5 V2.5" stroke="#111" stroke-width="0.8"/><circle cx="-5.5" cy="3.8" r="1.3" fill="#111"/><circle cx="0" cy="3.8" r="1.3" fill="#111"/><circle cx="5.5" cy="3.8" r="1.3" fill="#111"/></g></g></svg>
</body></html>
